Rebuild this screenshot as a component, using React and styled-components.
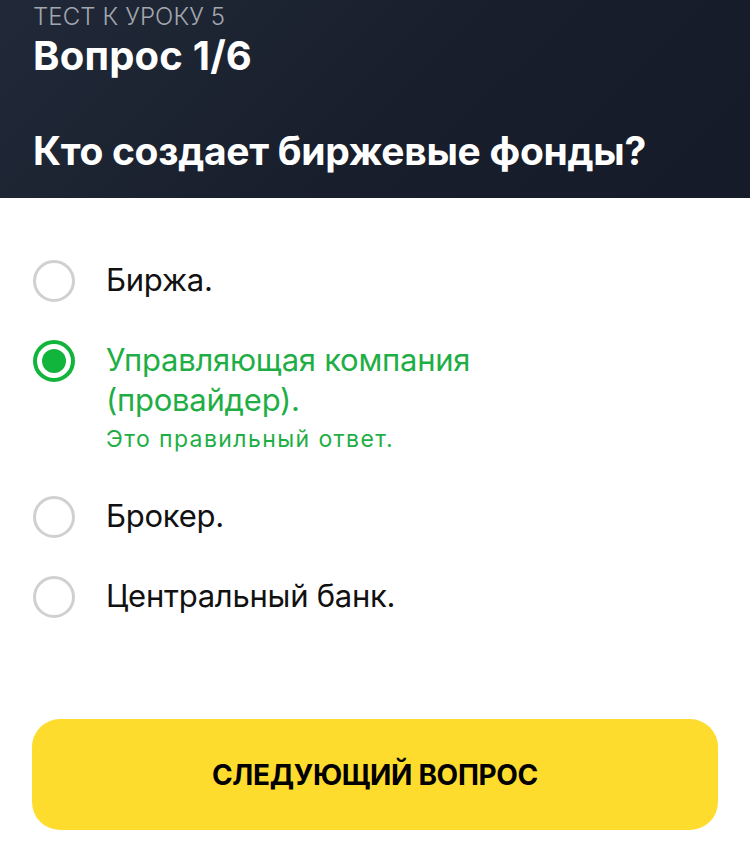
import React, { useState } from "react";
import styled, { createGlobalStyle } from "styled-components";

const GlobalStyle = createGlobalStyle`
  html, body {
    margin: 0;
    padding: 0;
    background: #fff;
  }
  body {
    font-family: Inter, "Noto Sans", "DejaVu Sans", sans-serif;
    -webkit-font-smoothing: antialiased;
  }
`;

const Page = styled.div`
  display: flex;
  flex-direction: column;
  height: 842px;
  overflow: hidden;
`;

const Header = styled.div`
  height: 198px;
  box-sizing: border-box;
  padding: 0 33px;
  background: linear-gradient(135deg, #212938 0%, #181e2b 55%, #151b28 100%);
  color: #fff;
`;

const Label = styled.div`
  font-size: 24px;
  font-weight: 300;
  line-height: 34px;
  color: #a2a6ae;
  letter-spacing: 0.1px;
`;

const Counter = styled.h2`
  margin: 0;
  font-size: 40px;
  font-weight: 700;
  line-height: 44px;
  letter-spacing: 0.2px;
`;

const Question = styled.h1`
  margin: 51px 0 0;
  font-size: 39px;
  font-weight: 700;
  line-height: 44px;
  letter-spacing: -0.3px;
`;

const List = styled.div`
  display: flex;
  flex-direction: column;
  gap: 38px;
  padding: 62px 33px 0;
`;

const Option = styled.div`
  display: flex;
  align-items: flex-start;
  gap: 31px;
  cursor: pointer;
`;

const Radio = styled.span`
  flex: none;
  width: 42px;
  height: 42px;
  box-sizing: border-box;
  border-radius: 50%;
  border-style: solid;
  border-color: ${(p) => (p.$checked ? "#12b53b" : "#d0d0d0")};
  border-width: ${(p) => (p.$checked ? "4px" : "3px")};
  display: flex;
  align-items: center;
  justify-content: center;

  &::after {
    content: "";
    display: ${(p) => (p.$checked ? "block" : "none")};
    width: 24px;
    height: 24px;
    border-radius: 50%;
    background: #12b53b;
  }
`;

const Body = styled.div`
  display: flex;
  flex-direction: column;
`;

const OptionText = styled.div`
  font-size: 31px;
  line-height: 40px;
  letter-spacing: -0.25px;
  color: ${(p) => (p.$correct ? "#1fae45" : "#111")};
`;

const Note = styled.div`
  font-size: 23px;
  line-height: 28px;
  letter-spacing: 1.4px;
  padding: 5px 0 5px;
  color: #1fae45;
`;

const Button = styled.button`
  margin: auto 32px 12px;
  height: 111px;
  border: none;
  border-radius: 28px;
  background: #fddc2d;
  color: #000;
  font-family: Inter, "Noto Sans", sans-serif;
  font-size: 28px;
  font-weight: 700;
  letter-spacing: -0.3px;
  text-transform: uppercase;
  cursor: pointer;
`;

const answers = [
  { text: ["Биржа."] },
  { text: ["Управляющая компания", "(провайдер)."], correct: true },
  { text: ["Брокер."] },
  { text: ["Центральный банк."] },
];

export default function App() {
  const [picked] = useState(1);

  return (
    <Page>
      <GlobalStyle />
      <Header>
        <Label>ТЕСТ К УРОКУ 5</Label>
        <Counter>Вопрос 1/6</Counter>
        <Question>Кто создает биржевые фонды?</Question>
      </Header>
      <List>
        {answers.map((a, i) => (
          <Option key={i}>
            <Radio $checked={picked === i} />
            <Body>
              <OptionText $correct={picked === i && a.correct}>
                {a.text.map((line, j) => (
                  <div key={j}>{line}</div>
                ))}
              </OptionText>
              {picked === i && a.correct && <Note>Это правильный ответ.</Note>}
            </Body>
          </Option>
        ))}
      </List>
      <Button>Следующий вопрос</Button>
    </Page>
  );
}
